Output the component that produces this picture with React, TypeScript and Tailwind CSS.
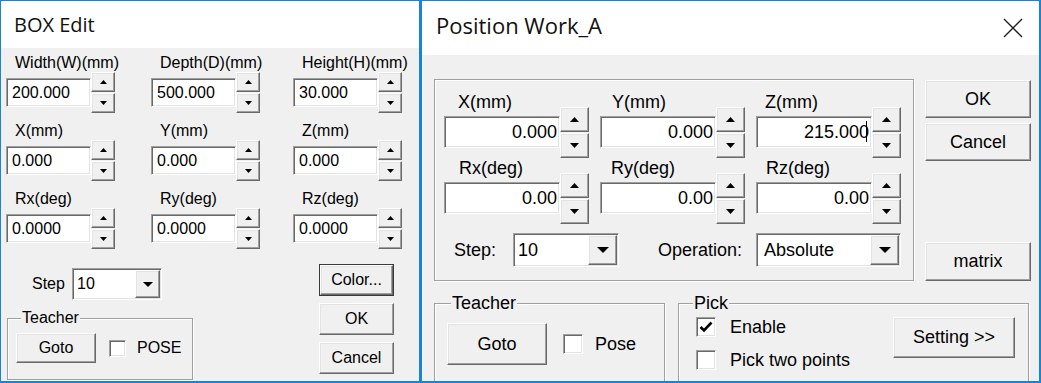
import React from "react";

const RAISED =
  "bg-[#f0f0f0] border border-t-white border-l-white border-r-[#696969] border-b-[#696969] shadow-[inset_-1px_-1px_0_#a0a0a0,inset_1px_1px_0_#e3e3e3]";
const SUNKEN =
  "bg-white border border-t-[#a0a0a0] border-l-[#a0a0a0] border-r-white border-b-white shadow-[inset_1px_1px_0_#696969,inset_-1px_-1px_0_#e3e3e3]";
const ETCHED =
  "border border-[#a0a0a0] shadow-[inset_1px_1px_0_#ffffff,1px_1px_0_#ffffff]";

function Tri({ up, w, h }: { up?: boolean; w: number; h: number }) {
  const pts = up ? `0,${h} ${w},${h} ${w / 2},0` : `0,0 ${w},0 ${w / 2},${h}`;
  return (
    <svg width={w} height={h} viewBox={`0 0 ${w} ${h}`} className="block">
      <polygon points={pts} fill="#000" />
    </svg>
  );
}

function SpinSmall() {
  return (
    <div className="flex flex-col gap-[1px] w-[24px] h-[41px] shrink-0">
      <div className={`${RAISED} h-[20px] flex items-center justify-center`}>
        <Tri up w={7} h={4} />
      </div>
      <div className={`${RAISED} h-[20px] flex items-center justify-center`}>
        <Tri w={7} h={4} />
      </div>
    </div>
  );
}

function SpinBig() {
  return (
    <div className="flex flex-col gap-[1px] w-[29px] h-[51px] shrink-0">
      <div className={`${RAISED} h-[25px] flex items-center justify-center`}>
        <Tri up w={9} h={5} />
      </div>
      <div className={`${RAISED} h-[25px] flex items-center justify-center`}>
        <Tri w={9} h={5} />
      </div>
    </div>
  );
}

function LeftField({ label, value }: { label: string; value: string }) {
  return (
    <div className="flex flex-col">
      <div className="ml-[9px] h-[18px] leading-[18px] whitespace-nowrap">{label}</div>
      <div className="mt-[6px] flex items-center h-[29px]">
        <div className={`${SUNKEN} w-[85px] h-[29px] flex items-center pl-[5px] leading-none`}>
          {value}
        </div>
        <SpinSmall />
      </div>
    </div>
  );
}

function RightField({
  label,
  value,
  lm,
  caret,
}: {
  label: string;
  value: string;
  lm: string;
  caret?: boolean;
}) {
  return (
    <div className="flex flex-col">
      <div className={`${lm} h-[20px] leading-[20px] whitespace-nowrap`}>{label}</div>
      <div className="mt-[4px] flex items-center h-[32px]">
        <div className={`${SUNKEN} w-[116px] h-[32px] flex items-center justify-end pr-[2px] leading-none`}>
          <span className="relative">
            {value}
            {caret && <span className="absolute right-[2px] top-[-2px] w-[1px] h-[21px] bg-black" />}
          </span>
        </div>
        <SpinBig />
      </div>
    </div>
  );
}

function Btn({ children, className }: { children: React.ReactNode; className: string }) {
  return (
    <div className={`${RAISED} flex items-center justify-center whitespace-nowrap ${className}`}>
      {children}
    </div>
  );
}

function Check({ big, checked }: { big?: boolean; checked?: boolean }) {
  return (
    <div
      className={`${SUNKEN} shrink-0 flex items-center justify-center ${
        big ? "w-[20px] h-[20px]" : "w-[17px] h-[17px]"
      }`}
    >
      {checked && (
        <svg width="14" height="12" viewBox="0 0 14 12" className="block">
          <path d="M1.5 6 L5 9.5 L12.5 1.5" fill="none" stroke="#000" strokeWidth="2.6" />
        </svg>
      )}
    </div>
  );
}

export default function App() {
  return (
    <div className="flex w-[1041px] h-[383px] overflow-hidden bg-white font-['Liberation_Sans',Arial,sans-serif] text-black">
      {/* BOX Edit dialog */}
      <div className="flex flex-col w-[420px] h-[383px] shrink-0 border-l border-t border-r border-b-2 border-[#1883d7]">
        <div className="h-[47px] shrink-0 bg-white flex items-center pl-[13px] font-['Open_Sans',sans-serif] text-[20px] text-[#111]">
          BOX Edit
        </div>
        <div className="flex-1 bg-[#f0f0f0] overflow-hidden text-[16px] pt-[6px] pl-[5px] flex flex-col">
          <div className="grid grid-cols-[145px_142px_124px] gap-y-[15px]">
            <LeftField label="Width(W)(mm)" value="200.000" />
            <LeftField label="Depth(D)(mm)" value="500.000" />
            <LeftField label="Height(H)(mm)" value="30.000" />
            <LeftField label="X(mm)" value="0.000" />
            <LeftField label="Y(mm)" value="0.000" />
            <LeftField label="Z(mm)" value="0.000" />
            <LeftField label="Rx(deg)" value="0.0000" />
            <LeftField label="Ry(deg)" value="0.0000" />
            <LeftField label="Rz(deg)" value="0.0000" />
          </div>
          <div className="mt-[21px] flex">
            <div className="flex flex-col">
              <div className="mt-[4px] flex items-center h-[32px]">
                <span className="ml-[26px] w-[40px]">Step</span>
                <div className={`${SUNKEN} w-[90px] h-[32px] p-[1px] flex items-center`}>
                  <span className="flex-1 pl-[3px]">10</span>
                  <div className={`${RAISED} w-[25px] h-full flex items-center justify-center`}>
                    <Tri w={10} h={5} />
                  </div>
                </div>
              </div>
              <fieldset className={`${ETCHED} mt-[9px] ml-[1px] w-[186px] h-[71px] p-0`}>
                <legend className="ml-[13px] px-[1px] leading-[18px] bg-[#f0f0f0]">Teacher</legend>
                <div className="flex items-center mt-[6px] ml-[8px]">
                  <Btn className="w-[80px] h-[30px]">Goto</Btn>
                  <div className="ml-[13px]">
                    <Check />
                  </div>
                  <span className="ml-[11px]">POSE</span>
                </div>
              </fieldset>
            </div>
            <div className="ml-auto mr-[25px] flex flex-col gap-[7px]">
              <div className="border border-[#3a3a3a] w-[75px] h-[32px]">
                <Btn className="w-full h-full">Color...</Btn>
              </div>
              <Btn className="w-[75px] h-[32px]">OK</Btn>
              <Btn className="w-[75px] h-[32px]">Cancel</Btn>
            </div>
          </div>
        </div>
      </div>

      {/* Position Work_A dialog */}
      <div className="flex flex-col w-[621px] h-[383px] shrink-0 border-t border-l-2 border-r-2 border-b-2 border-[#1883d7]">
        <div className="h-[54px] shrink-0 bg-white flex items-center justify-between pl-[14px] pr-[16px]">
          <span className="font-['Open_Sans',sans-serif] text-[22px] pb-[5px] text-[#111]">
            Position Work_A
          </span>
          <svg width="20" height="20" viewBox="0 0 20 20" className="block">
            <path d="M1 1 L19 19 M19 1 L1 19" stroke="#1b1b1b" strokeWidth="1.3" fill="none" />
          </svg>
        </div>
        <div className="flex-1 bg-[#f0f0f0] overflow-hidden text-[18px] pt-[24px] pl-[12px] flex flex-col">
          <div className="flex">
            <div className={`${ETCHED} w-[480px] h-[202px] pt-[12px] pl-[9px]`}>
              <div className="grid grid-cols-[156px_156px_156px] gap-y-[10px]">
                <RightField label="X(mm)" value="0.000" lm="ml-[14px]" />
                <RightField label="Y(mm)" value="0.000" lm="ml-[12px]" />
                <RightField label="Z(mm)" value="215.000" lm="ml-[9px]" caret />
                <RightField label="Rx(deg)" value="0.00" lm="ml-[15px]" />
                <RightField label="Ry(deg)" value="0.00" lm="ml-[11px]" />
                <RightField label="Rz(deg)" value="0.00" lm="ml-[10px]" />
              </div>
              <div className="mt-[19px] flex items-center h-[34px]">
                <span className="ml-[10px] w-[59px]">Step:</span>
                <div className={`${SUNKEN} w-[106px] h-[34px] p-[1px] flex items-center`}>
                  <span className="flex-1 pl-[3px]">10</span>
                  <div className={`${RAISED} w-[29px] h-full flex items-center justify-center`}>
                    <Tri w={12} h={6} />
                  </div>
                </div>
                <span className="ml-[39px] w-[98px]">Operation:</span>
                <div className={`${SUNKEN} w-[145px] h-[34px] p-[1px] flex items-center`}>
                  <span className="flex-1 pl-[6px]">Absolute</span>
                  <div className={`${RAISED} w-[29px] h-full flex items-center justify-center`}>
                    <Tri w={12} h={6} />
                  </div>
                </div>
              </div>
            </div>
            <div className="ml-[11px] w-[106px] h-[202px] flex flex-col">
              <Btn className="mt-[1px] h-[38px]">OK</Btn>
              <Btn className="mt-[5px] h-[38px]">Cancel</Btn>
              <Btn className="mt-auto h-[39px]">matrix</Btn>
            </div>
          </div>
          <div className="mt-[12px] flex">
            <fieldset className={`${ETCHED} w-[231px] h-[100px] p-0`}>
              <legend className="ml-[16px] px-[1px] leading-[20px] bg-[#f0f0f0]">Teacher</legend>
              <div className="flex items-center mt-[10px] ml-[12px]">
                <Btn className="w-[100px] h-[42px]">Goto</Btn>
                <div className="ml-[16px]">
                  <Check big />
                </div>
                <span className="ml-[12px]">Pose</span>
              </div>
            </fieldset>
            <fieldset className={`${ETCHED} ml-[13px] w-[351px] h-[100px] p-0`}>
              <legend className="ml-[14px] px-[1px] leading-[20px] bg-[#f0f0f0]">Pick</legend>
              <div className="flex">
                <div className="flex flex-col mt-[4px] ml-[17px]">
                  <div className="flex items-center h-[20px]">
                    <Check big checked />
                    <span className="ml-[14px]">Enable</span>
                  </div>
                  <div className="flex items-center h-[20px] mt-[13px]">
                    <Check big />
                    <span className="ml-[14px]">Pick two points</span>
                  </div>
                </div>
                <Btn className="ml-auto mr-[13px] mt-[4px] w-[122px] h-[41px]">Setting &gt;&gt;</Btn>
              </div>
            </fieldset>
          </div>
        </div>
      </div>
    </div>
  );
}
